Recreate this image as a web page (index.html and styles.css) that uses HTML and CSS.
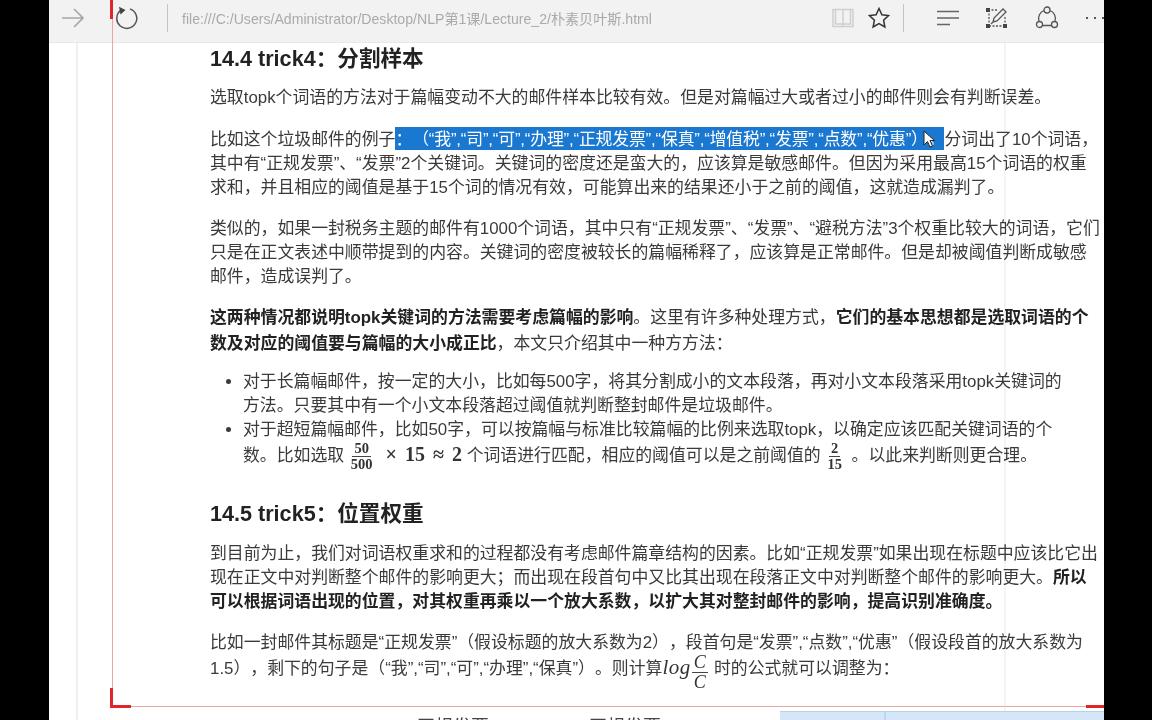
FILE: index.html
```html
<!DOCTYPE html>
<html lang="zh">
<head>
<meta charset="utf-8">
<title>朴素贝叶斯</title>
<link rel="stylesheet" href="styles.css">
</head>
<body>
<div class="screen">
  <div class="browser">
    <header class="toolbar">
      <svg class="icon back" width="22" height="20" viewBox="0 0 22 20"><path d="M0 10H21M12 1l9 9-9 9"/></svg>
      <svg class="icon refresh" width="24" height="24" viewBox="0 0 24 24"><path d="M7 4.200A10 10 0 1 0 16 2.900"/><path class="fill" d="M5 .8l6.500 3.200-5 4.500z"/></svg>
      <span class="divider first"></span>
      <span class="url">file:///C:/Users/Administrator/Desktop/NLP第1课/Lecture_2/朴素贝叶斯.html</span>
      <svg class="icon book" width="22" height="20" viewBox="0 0 22 20"><path d="M1 1.500H21V18.500H1zM11 1.500V18.500M3.500 1.500V16H11H18.500V1.500"/></svg>
      <svg class="icon star" width="22" height="22" viewBox="0 0 22 22"><path d="M11 1.500l2.900 6.300 6.600.8-4.900 4.600 1.300 6.800L11 16.700 5.100 20l1.300-6.800L1.500 8.600l6.600-.8z"/></svg>
      <span class="divider second"></span>
      <svg class="icon hub" width="22" height="16" viewBox="0 0 22 16"><path d="M0 1.500H22M0 8H22M0 14.500H13"/></svg>
      <svg class="icon note" width="22" height="22" viewBox="0 0 22 22"><path class="dash" d="M2 3H12M3 3V19M3 19H19M19 10V19"/><path d="M7 15L8 11 17 2 20 5 11 14zM7 15L5 17"/><path class="fill" d="M0 1h4v4H0zM0 17h4v4H0zM17 17h4v4h-4z"/></svg>
      <svg class="icon share" width="24" height="24" viewBox="0 0 24 24"><path d="M9 4.500A8.500 8.500 0 0 0 4 15M15 4.500A8.500 8.500 0 0 1 20 15M7 19.500H17"/><circle cx="12" cy="4" r="3"/><circle cx="4.500" cy="18.500" r="3"/><circle cx="19.500" cy="18.500" r="3"/></svg>
      <span class="dots"><i></i><i></i><i></i></span>
    </header>
    <main class="page">
      <article class="doc">
        <h2>14.4 trick4<span class="mid">：</span>分割样本</h2>
        <p>选取topk个词语的方法对于篇幅变动不大的邮件样本比较有效。但是对篇幅过大或者过小的邮件则会有判断误差。</p>
        <p>比如这个垃圾邮件的例子<span class="selected"><span class="mid">：</span>（“我”,“司”,“可”,“办理”,“正规发票”,“保真”,“增值税”,“发票”,“点数”,“优惠”）。<svg class="cursor" width="12" height="18" viewBox="0 0 12 18"><path d="M1 1V15L4.500 11.500 7 17 9.500 16 7 10.500H11.500z"/></svg></span>分词出了10个词语，<br>其中有“正规发票”、“发票”2个关键词。关键词的密度还是蛮大的，应该算是敏感邮件。但因为采用最高15个词语的权重<br>求和，并且相应的阈值是基于15个词的情况有效，可能算出来的结果还小于之前的阈值，这就造成漏判了。</p>
        <p>类似的，如果一封税务主题的邮件有1000个词语，其中只有“正规发票”、“发票”、“避税方法”3个权重比较大的词语，它们<br>只是在正文表述中顺带提到的内容。关键词的密度被较长的篇幅稀释了，应该算是正常邮件。但是却被阈值判断成敏感<br>邮件，造成误判了。</p>
        <p class="lead"><b>这两种情况都说明topk关键词的方法需要考虑篇幅的影响</b>。这里有许多种处理方式，<b>它们的基本思想都是选取词语的个<br>数及对应的阈值要与篇幅的大小成正比</b>，本文只介绍其中一种方方法<span class="mid">：</span></p>
        <ul>
          <li>对于长篇幅邮件，按一定的大小，比如每500字，将其分割成小的文本段落，再对小文本段落采用topk关键词的<br>方法。只要其中有一个小文本段落超过阈值就判断整封邮件是垃圾邮件。</li>
          <li>对于超短篇幅邮件，比如50字，可以按篇幅与标准比较篇幅的比例来选取topk，以确定应该匹配关键词语的个<br>数。比如选取 <span class="math"><span class="frac small"><span class="num">50</span><span>500</span></span> × 15 ≈ 2</span> 个词语进行匹配，相应的阈值可以是之前阈值的 <span class="math"><span class="frac small"><span class="num">2</span><span>15</span></span></span> 。以此来判断则更合理。</li>
        </ul>
        <h2 class="second-title">14.5 trick5<span class="mid">：</span>位置权重</h2>
        <p>到目前为止，我们对词语权重求和的过程都没有考虑邮件篇章结构的因素。比如“正规发票”如果出现在标题中应该比它出<br>现在正文中对判断整个邮件的影响更大；而出现在段首句中又比其出现在段落正文中对判断整个邮件的影响更大。<b>所以<br>可以根据词语出现的位置，对其权重再乘以一个放大系数，以扩大其对整封邮件的影响，提高识别准确度。</b></p>
        <p class="last">比如一封邮件其标题是“正规发票”（假设标题的放大系数为2），段首句是“发票”,“点数”,“优惠”（假设段首的放大系数为<br>1.5），剩下的句子是（“我”,“司”,“可”,“办理”,“保真”）。则计算<span class="math italic">log<span class="frac"><span class="num">C</span><span>C</span></span></span> 时的公式就可以调整为<span class="mid">：</span></p>
        <div class="peek"><span>“正规发票”</span><span class="far">“正规发票”</span></div>
      </article>
    </main>
  </div>
  <div class="frame"></div>
  <span class="tick tick-top"></span>
  <span class="tick tick-left"></span>
  <span class="tick tick-bottom"></span>
  <span class="tick tick-right"></span>
  <div class="tray"></div>
</div>
</body>
</html>
```
FILE: styles.css
```css
* { box-sizing: border-box; }
html, body { margin: 0; height: 100%; background: #000; overflow: hidden; }
.screen {
  position: relative;
  width: 1152px;
  height: 720px;
  padding: 0 48px 0 49px;
  background: #000;
  font-family: "Liberation Sans", "Noto Sans CJK SC", sans-serif;
}
.browser {
  display: flex;
  flex-direction: column;
  height: 100%;
  background: #fff;
  overflow: hidden;
  filter: blur(0.4px);
}
.toolbar {
  display: flex;
  align-items: center;
  flex: 0 0 43px;
  height: 43px;
  padding: 0 0 6px 13px;
  background: #f2f2f2;
  border-bottom: 1px solid #e8e8e8;
}
.icon { flex: none; fill: none; stroke: #444; stroke-width: 1.3; }
.icon .fill { fill: #444; stroke: none; }
.icon .dash { stroke-dasharray: 2 1.500; }
.back { stroke: #a6a6a6; stroke-width: 1.600; }
.refresh { margin-left: 30px; stroke: #555; stroke-width: 1.500; }
.divider { flex: none; width: 1px; height: 28px; background: #c4c4c4; }
.divider.first { margin-left: 29px; }
.url {
  flex: 1;
  min-width: 0;
  margin-left: 14px;
  color: #aaa;
  font-size: 14.100px;
  white-space: nowrap;
}
.book { stroke: #cfcfcf; stroke-width: 1.500; }
.star { margin-left: 14px; stroke: #333; stroke-width: 1.500; }
.divider.second { margin-left: 13px; }
.hub { margin-left: 33px; stroke: #666; stroke-width: 1.500; }
.note { margin-left: 27px; stroke: #555; }
.share { margin-left: 27px; stroke: #555; }
.dots { display: flex; gap: 6px; margin-left: 27px; }
.dots i { width: 2px; height: 2px; background: #555; }

.page {
  flex: 1;
  min-height: 0;
  overflow: hidden;
  padding: 1px 0 0 161px;
  background:
    linear-gradient(#f0f0f0, #f0f0f0) 27px 0 / 2px 100% no-repeat,
    linear-gradient(#f4f4f4, #f4f4f4) 955px 0 / 2px 100% no-repeat,
    #fff;
}
.doc {
  width: 900px;
  color: #3a3a3a;
  font-size: 16.860px;
  line-height: 24px;
  white-space: nowrap;
  text-spacing-trim: space-all;
  font-kerning: none;
}
.mid { font-family: "Noto Sans CJK TC", sans-serif; }
h2 {
  margin: 0 0 14px;
  color: #222;
  font-size: 21.600px;
  line-height: 26px;
  font-weight: 700;
}
h2.second-title { margin: 31px 0 15px; }
p { margin: 0 0 17px; }
p.lead { margin-bottom: 14px; }
b { color: #222; font-weight: 700; }
ul { margin: 0; padding: 0 0 0 33px; }
li { position: relative; list-style: disc; }
.selected {
  position: relative;
  display: inline-block;
  line-height: 21px;
  letter-spacing: -0.190px;
  background: #1b78d0;
  color: #fff;
}
.cursor {
  position: absolute;
  right: 9px;
  top: 3px;
  fill: #fff;
  stroke: #222;
  stroke-width: 1;
}
.math { font-family: "Liberation Serif", serif; font-size: 20px; font-weight: 700; color: #333; word-spacing: 3px; }
.math.italic { font-style: italic; font-weight: 400; font-size: 21px; letter-spacing: 0.500px; word-spacing: 0; }
.frac {
  display: inline-flex;
  flex-direction: column;
  align-items: center;
  vertical-align: middle;
  margin: 0 1px;
  font-size: 18px;
  line-height: 19px;
}
.frac.small { font-size: 14.500px; line-height: 15px; margin: -5px 5px -5px 2px; }
.frac .num { padding: 0 2px; border-bottom: 1px solid #444; }
.last { margin-bottom: 0; }
.last .frac { margin-top: -10px; margin-bottom: -10px; vertical-align: 6px; }
.peek {
  display: flex;
  height: 24px;
  margin-top: 33px;
  padding-left: 201px;
  color: #444;
  font-size: 18px;
}
.peek .far { margin-left: 88px; }

.frame {
  position: absolute;
  left: 112px;
  top: 0;
  width: 992px;
  height: 707px;
  border-left: 1px solid #efa3a3;
  border-bottom: 1px solid #e9a7a0;
}
.tick { position: absolute; background: #e0262a; }
.tick-top { left: 110px; top: 0; width: 3px; height: 19px; }
.tick-left { left: 110px; top: 688px; width: 3px; height: 20px; }
.tick-bottom { left: 110px; top: 705px; width: 21px; height: 3px; }
.tick-right { left: 1086px; top: 705px; width: 18px; height: 3px; }
.tray {
  position: absolute;
  left: 780px;
  top: 711px;
  width: 324px;
  height: 9px;
  background: linear-gradient(#bcd7ef, #bcd7ef) 104px 0 / 2px 100% no-repeat, #d4e6f7;
  border-top: 1px solid #b8d2ea;
}
```
